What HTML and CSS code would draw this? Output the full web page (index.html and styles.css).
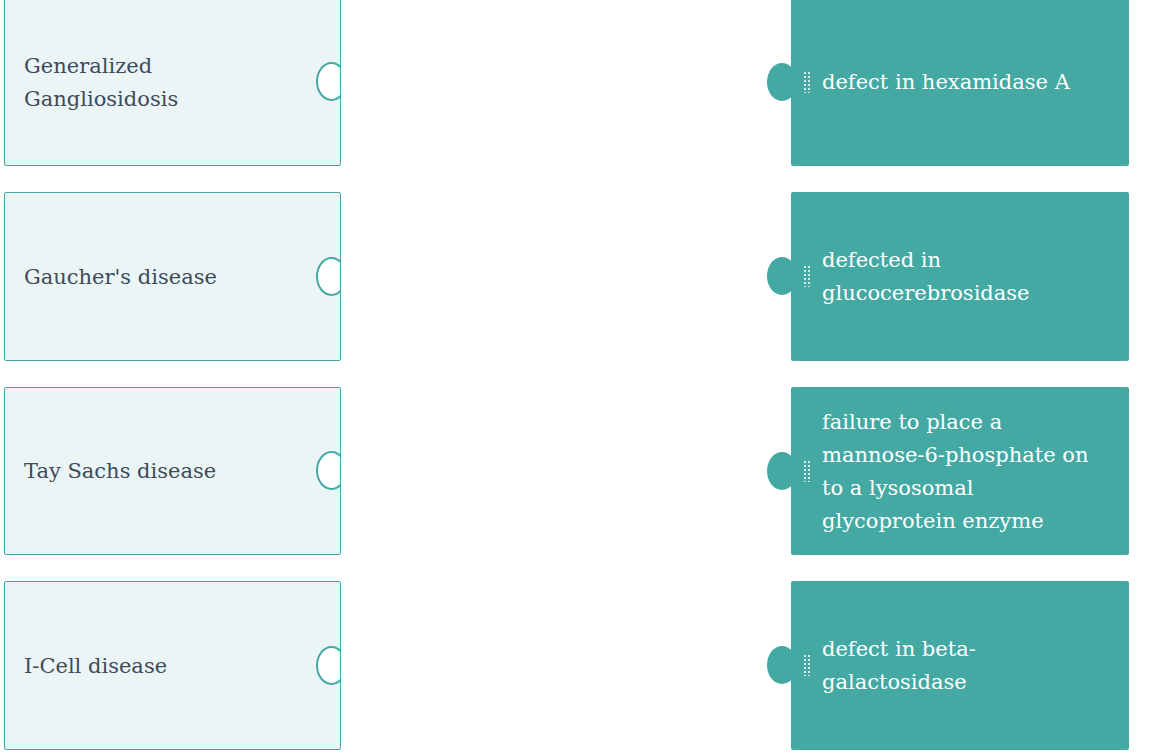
FILE: index.html
```html
<!DOCTYPE html>
<html>
<head>
<meta charset="utf-8">
<link rel="stylesheet" href="styles.css">
</head>
<body>
<div class="board">
  <div class="row">
    <div class="term"><span class="label">Generalized<br>Gangliosidosis</span><span class="socket"></span></div>
    <div class="match"><span class="plug"></span><span class="grip"></span><span class="label">defect in hexamidase A</span></div>
  </div>
  <div class="row">
    <div class="term"><span class="label">Gaucher's disease</span><span class="socket"></span></div>
    <div class="match"><span class="plug"></span><span class="grip"></span><span class="label">defected in<br>glucocerebrosidase</span></div>
  </div>
  <div class="row">
    <div class="term"><span class="label">Tay Sachs disease</span><span class="socket"></span></div>
    <div class="match"><span class="plug"></span><span class="grip"></span><span class="label">failure to place a<br>mannose-6-phosphate on<br>to a lysosomal<br>glycoprotein enzyme</span></div>
  </div>
  <div class="row">
    <div class="term"><span class="label">I-Cell disease</span><span class="socket"></span></div>
    <div class="match"><span class="plug"></span><span class="grip"></span><span class="label">defect in beta-<br>galactosidase</span></div>
  </div>
</div>
</body>
</html>
```
FILE: styles.css
```css
html, body {
  margin: 0;
  padding: 0;
  background: #ffffff;
  overflow: hidden;
}
body {
  width: 1151px;
  height: 753px;
  font-family: "DejaVu Serif", "Liberation Serif", serif;
}
.board {
  display: flex;
  flex-direction: column;
  gap: 26px;
  margin-top: -2.5px;
  padding-left: 4px;
  width: 1125px;
}
.row {
  display: flex;
  justify-content: space-between;
  height: 168.5px;
}
.term {
  position: relative;
  box-sizing: border-box;
  width: 337px;
  height: 168.5px;
  border: 1px solid #43a9a2;
  border-radius: 2px;
  background: #ebf5f5;
  overflow: hidden;
  display: flex;
  align-items: center;
  padding-left: 19px;
  padding-top: 2px;
}
.label {
  font-size: 21px;
  line-height: 33px;
}
.term .label {
  color: #3d4b5c;
}
.socket {
  position: absolute;
  right: -7px;
  top: 50%;
  width: 27px;
  height: 35px;
  margin-top: -19.5px;
  border: 2px solid #43a9a2;
  border-radius: 50%;
  background: #ffffff;
}
.match {
  position: relative;
  box-sizing: border-box;
  width: 338px;
  height: 168.5px;
  border-radius: 2px;
  background: #43a9a2;
  display: flex;
  align-items: center;
  padding-left: 13px;
  padding-top: 2px;
}
.match .label {
  color: #ffffff;
  margin-left: 12px;
}
.plug {
  position: absolute;
  left: -24px;
  top: 50%;
  width: 30px;
  height: 38px;
  margin-top: -19px;
  border-radius: 50%;
  background: #43a9a2;
}
.grip {
  flex: none;
  width: 6px;
  height: 22px;
  margin-top: -2px;
  background-image: radial-gradient(circle, #d6ecea 0.9px, transparent 1.2px);
  background-size: 4px 4px;
  background-position: -1px 0;
}
```
